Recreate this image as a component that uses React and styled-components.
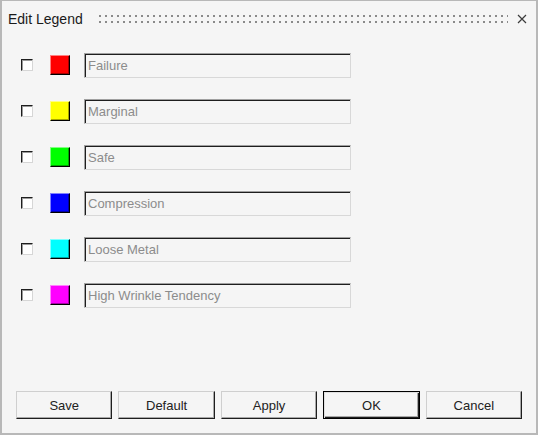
import styled, { createGlobalStyle } from "styled-components";

const GlobalStyle = createGlobalStyle`
  html, body {
    margin: 0;
    padding: 0;
    background: #f5f5f5;
  }
  body {
    font-family: "Liberation Sans", Arial, sans-serif;
  }
`;

const legend = [
  { color: "#ff0000", label: "Failure" },
  { color: "#ffff00", label: "Marginal" },
  { color: "#00ff00", label: "Safe" },
  { color: "#0000ff", label: "Compression" },
  { color: "#00ffff", label: "Loose Metal" },
  { color: "#ff00ff", label: "High Wrinkle Tendency" },
];

const buttons = ["Save", "Default", "Apply", "OK", "Cancel"];

function App() {
  return (
    <>
      <GlobalStyle />
      <Window>
        <TitleBar>
          <Title>Edit Legend</Title>
          <Grip />
          <Close aria-label="Close">
            <svg width="10" height="10" viewBox="0 0 10 10">
              <path d="M1 1 L9 9 M9 1 L1 9" stroke="#3c3c3c" strokeWidth="1.2" fill="none" />
            </svg>
          </Close>
        </TitleBar>
        <List>
          {legend.map((item) => (
            <Row key={item.label}>
              <Check type="checkbox" />
              <Swatch $color={item.color} />
              <Field placeholder={item.label} />
            </Row>
          ))}
        </List>
        <Footer>
          {buttons.map((b) => (
            <Button key={b} $default={b === "OK"}>
              {b}
            </Button>
          ))}
        </Footer>
      </Window>
    </>
  );
}

const Window = styled.div`
  width: 538px;
  height: 435px;
  box-sizing: border-box;
  background: #f5f5f5;
  border: 2px solid #b8b8b8;
  border-top-width: 1px;
  display: flex;
  flex-direction: column;
`;

const TitleBar = styled.div`
  height: 35px;
  display: flex;
  align-items: center;
  padding: 0 9px 0 6px;
`;

const Title = styled.span`
  font-size: 14px;
  color: #1a1a1a;
  margin-right: 16px;
  white-space: nowrap;
`;

const Grip = styled.div`
  flex: 1;
  height: 8px;
  margin-right: 9px;
  background-image: linear-gradient(90deg, #8a8a8a 2px, transparent 2px),
    linear-gradient(90deg, #8a8a8a 2px, transparent 2px);
  background-size: 6px 2px, 6px 2px;
  background-position: 0 0, 0 6px;
  background-repeat: repeat-x;
`;

const Close = styled.div`
  width: 10px;
  height: 10px;
  display: flex;
`;

const List = styled.div`
  padding-top: 6px;
  display: flex;
  flex-direction: column;
`;

const Row = styled.div`
  height: 46px;
  display: flex;
  align-items: center;
  padding-left: 19px;
`;

const Check = styled.input`
  appearance: none;
  margin: 0 17px 0 0;
  width: 12px;
  height: 12px;
  box-sizing: border-box;
  background: #fff;
  border-top: 1px solid #1e1e1e;
  border-left: 1px solid #1e1e1e;
  border-right: 1px solid #d6d6d6;
  border-bottom: 1px solid #d6d6d6;
  box-shadow: inset 1px 1px #9a9a9a;
`;

const Swatch = styled.div`
  width: 20px;
  height: 20px;
  box-sizing: border-box;
  background: ${({ $color }) => $color};
  border-top: 1px solid rgba(255, 255, 255, 0.5);
  border-left: 1px solid rgba(255, 255, 255, 0.5);
  border-right: 1px solid #000;
  border-bottom: 1px solid #000;
  box-shadow: inset -1px -1px rgba(0, 0, 0, 0.35);
  margin-right: 14px;
  margin-top: -1px;
`;

const Field = styled.input`
  width: 267px;
  height: 25px;
  box-sizing: border-box;
  background: #f5f5f5;
  border-top: 1px solid #a0a0a0;
  border-left: 1px solid #a0a0a0;
  border-right: 1px solid #d8d8d8;
  border-bottom: 1px solid #d8d8d8;
  box-shadow: inset 1px 1px #1e1e1e;
  padding: 0 0 0 3px;
  font-family: "Liberation Sans", Arial, sans-serif;
  font-size: 13px;
  outline: none;
  &::placeholder {
    color: #8c8c8c;
  }
`;

const Footer = styled.div`
  margin-top: auto;
  display: flex;
  gap: 6px;
  padding: 0 14px 14px 14px;
`;

const Button = styled.button`
  flex: 1;
  height: 28px;
  box-sizing: border-box;
  background: #f5f5f5;
  font-family: "Liberation Sans", Arial, sans-serif;
  font-size: 13px;
  font-weight: 400;
  color: #222;
  padding: 0;
  border-top: 1px solid #cfcfcf;
  border-left: 1px solid #cfcfcf;
  border-right: 1px solid #1e1e1e;
  border-bottom: 1px solid #1e1e1e;
  box-shadow: inset -1px -1px #a8a8a8;
  ${({ $default }) =>
    $default &&
    `
    border: 1px solid #000;
    box-shadow: inset 1px 1px #e0e0e0, inset -1px -1px #1e1e1e, inset -2px -2px #a8a8a8;
  `}
`;

export default App;
